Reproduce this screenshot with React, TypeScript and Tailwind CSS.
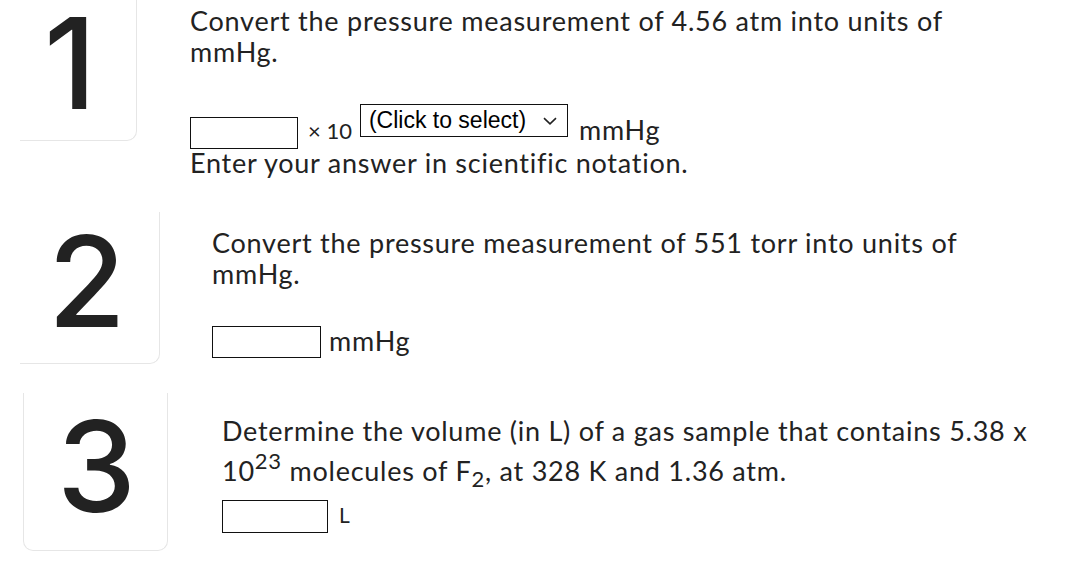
import React from "react";

const body = "font-['Lato',_'Liberation_Sans',_sans-serif] text-[27px] tracking-[0.75px] leading-[31px] text-[#222]";
const num = "font-['Inter',_'Noto_Sans',_sans-serif] font-medium text-[126px] leading-none text-[#222]";

export default function App() {
  return (
    <div className="w-[1090px] h-[580px] bg-white overflow-hidden">
      {/* Row 1 */}
      <div className="flex items-start h-[212px]">
        <div className="ml-[20px] w-[117px] h-[141px] shrink-0 border-r border-b border-[#e6e6e6] rounded-br-[10px] bg-white pt-[0px] pl-[24px]">
          <span className={num}>1</span>
        </div>
        <div className={`ml-[53px] pt-[5px] ${body}`}>
          <div>Convert the pressure measurement of 4.56 atm into units of</div>
          <div>mmHg.</div>
          <div className="mt-[37px] flex items-end h-[45px]">
            <div className="w-[108px] h-[32px] border-[1.5px] border-[#111]" />
            <span className="ml-[10px] mb-[7px] text-[22px] tracking-normal leading-none">× 10</span>
            <div className="ml-[8px] mb-[12px] w-[208px] h-[33px] border-[1.5px] border-[#111] flex items-center justify-between pl-[8px] pr-[10px]">
              <span className="font-['Liberation_Sans',_Arial,_sans-serif] text-[23px] tracking-normal leading-none text-black">(Click to select)</span>
              <svg width="14" height="8" viewBox="0 0 14 8" fill="none">
                <path d="M1 1.2 L7 6.8 L13 1.2" stroke="#222" strokeWidth="1.6" />
              </svg>
            </div>
            <span className="ml-[11px] mb-[6px] leading-none">mmHg</span>
          </div>
          <div className="-mt-[2px]">Enter your answer in scientific notation.</div>
        </div>
      </div>

      {/* Row 2 */}
      <div className="flex items-start h-[181px]">
        <div className="ml-[20px] w-[140px] h-[152px] shrink-0 border-r border-b border-[#e6e6e6] rounded-br-[10px] bg-white pt-[6px] pl-[28px]">
          <span className={num}>2</span>
        </div>
        <div className={`ml-[52px] pt-[15px] ${body}`}>
          <div>Convert the pressure measurement of 551 torr into units of</div>
          <div>mmHg.</div>
          <div className="mt-[37px] flex items-end">
            <div className="w-[109px] h-[32px] border-[1.5px] border-[#111]" />
            <span className="ml-[8px] mb-[4px] leading-none">mmHg</span>
          </div>
        </div>
      </div>

      {/* Row 3 */}
      <div className="flex items-start">
        <div className="ml-[23px] w-[145px] h-[158px] shrink-0 border-l border-r border-b border-[#e6e6e6] rounded-b-[10px] bg-white pt-[10px] pl-[33px]">
          <span className={num}>3</span>
        </div>
        <div className={`ml-[54px] pt-[22px] ${body}`}>
          <div>Determine the volume (in L) of a gas sample that contains 5.38 x</div>
          <div className="mt-[9px]">
            10<span className="relative -top-[12px] text-[22px]">23</span> molecules of F<span className="relative top-[6px] text-[22px]">2</span>, at 328 K and 1.36 atm.
          </div>
          <div className="mt-[12px] flex items-end">
            <div className="w-[106px] h-[33px] border-[1.5px] border-[#111]" />
            <span className="ml-[11px] mb-[8px] text-[21px] leading-none">L</span>
          </div>
        </div>
      </div>
    </div>
  );
}
